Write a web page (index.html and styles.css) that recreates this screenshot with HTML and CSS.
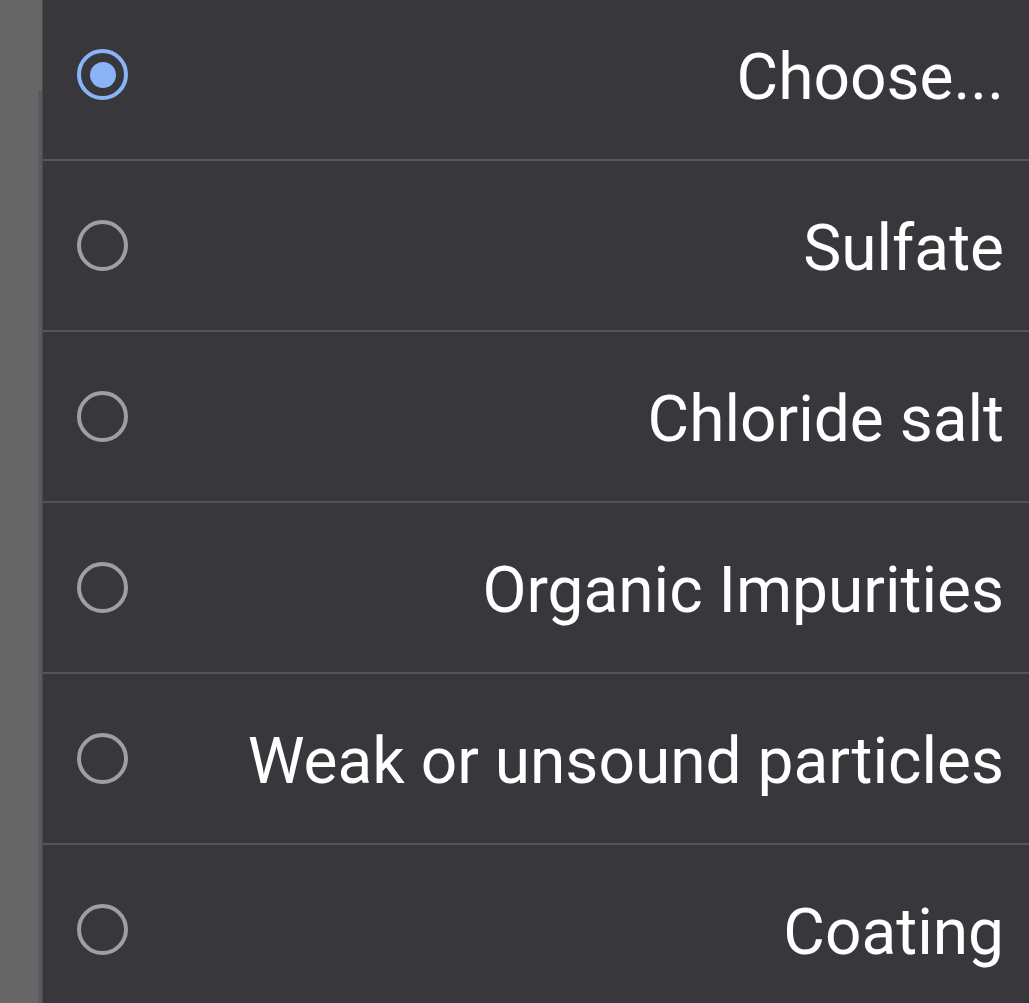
FILE: index.html
```html
<!DOCTYPE html>
<html>
<head>
<meta charset="utf-8">
<link rel="stylesheet" href="styles.css">
</head>
<body>
<div class="screen">
  <div class="backdrop"><div class="edge"></div></div>
  <div class="panel">
    <div class="list">
      <div class="row">
        <span class="radio checked"><span class="dot"></span></span>
        <span class="label">Choose...</span>
      </div>
      <div class="row">
        <span class="radio"></span>
        <span class="label">Sulfate</span>
      </div>
      <div class="row">
        <span class="radio"></span>
        <span class="label">Chloride salt</span>
      </div>
      <div class="row">
        <span class="radio"></span>
        <span class="label">Organic Impurities</span>
      </div>
      <div class="row">
        <span class="radio"></span>
        <span class="label">Weak or unsound particles</span>
      </div>
      <div class="row">
        <span class="radio"></span>
        <span class="label">Coating</span>
      </div>
    </div>
  </div>
</div>
</body>
</html>
```
FILE: styles.css
```css
html, body {
  margin: 0;
  padding: 0;
  height: 100%;
  overflow: hidden;
  background: #38373c;
}
.screen {
  display: flex;
  height: 1003px;
  width: 1029px;
  overflow: hidden;
}
.backdrop {
  width: 42px;
  flex: none;
  background: #666666;
  display: flex;
  justify-content: flex-end;
}
.edge {
  width: 4px;
  margin-top: 90px;
  background: #5a5a5c;
}
.panel {
  flex: 1;
  background: #38373c;
  border-left: 1px solid #4a494e;
  overflow: hidden;
}
.list {
  margin-top: -10px;
  display: flex;
  flex-direction: column;
}
.row {
  height: 169px;
  border-bottom: 2px solid #55545a;
  display: flex;
  align-items: center;
  justify-content: space-between;
  padding: 0 25px 0 34px;
}
.radio {
  width: 43px;
  height: 43px;
  border: 4.5px solid #9aa0a6;
  border-radius: 50%;
  display: flex;
  align-items: center;
  justify-content: center;
  flex: none;
}
.radio.checked {
  border-color: #8ab4f8;
}
.dot {
  width: 26px;
  height: 26px;
  border-radius: 50%;
  background: #8ab4f8;
}
.label {
  font-family: Roboto, "Noto Sans", sans-serif;
  font-size: 64px;
  color: #ffffff;
  line-height: 1;
  padding-top: 6px;
  white-space: nowrap;
}
```
